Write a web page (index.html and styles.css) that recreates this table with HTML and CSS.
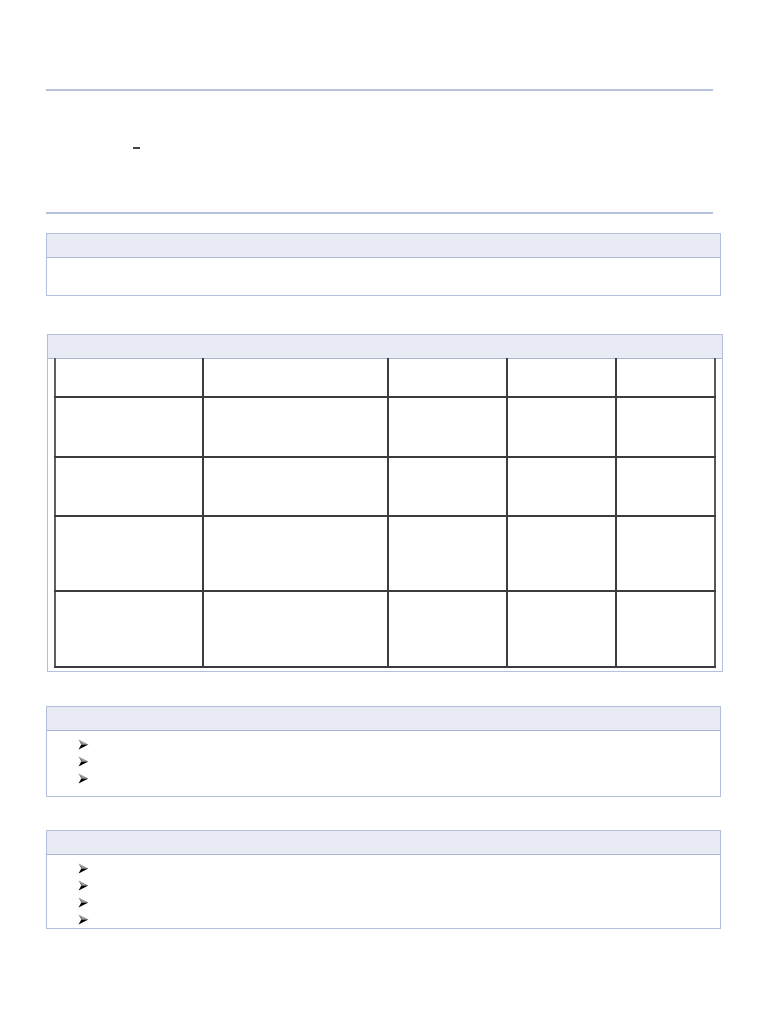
FILE: index.html
```html
<!DOCTYPE html>
<html>
<head>
<meta charset="utf-8">
<link rel="stylesheet" href="styles.css">
</head>
<body>
<div class="page">
  <div class="rule"></div>
  <div class="title-area"><span class="dash"></span></div>
  <div class="rule"></div>

  <section class="box box-1">
    <div class="box-head"></div>
    <div class="box-body"></div>
  </section>

  <section class="box box-2">
    <div class="box-head"></div>
    <div class="box-table">
      <table class="grid">
        <colgroup>
          <col class="c1"><col class="c2"><col class="c3"><col class="c4"><col class="c5">
        </colgroup>
        <tr class="r1"><td></td><td></td><td></td><td></td><td></td></tr>
        <tr class="r2"><td></td><td></td><td></td><td></td><td></td></tr>
        <tr class="r3"><td></td><td></td><td></td><td></td><td></td></tr>
        <tr class="r4"><td></td><td></td><td></td><td></td><td></td></tr>
        <tr class="r5"><td></td><td></td><td></td><td></td><td></td></tr>
      </table>
    </div>
  </section>

  <section class="box box-3">
    <div class="box-head"></div>
    <ul class="bullets">
      <li><svg class="arrow" viewBox="0 0 10 10"><path d="M0.5 0.5 L9.5 5 L4.5 5 Z" fill="#9a9a9a"/><path d="M9.5 5 L0.5 9.5 L3 5 Z" fill="#000"/><path d="M0.5 0.5 L4.5 5 L3 5 Z" fill="#555"/></svg></li>
      <li><svg class="arrow" viewBox="0 0 10 10"><path d="M0.5 0.5 L9.5 5 L4.5 5 Z" fill="#9a9a9a"/><path d="M9.5 5 L0.5 9.5 L3 5 Z" fill="#000"/><path d="M0.5 0.5 L4.5 5 L3 5 Z" fill="#555"/></svg></li>
      <li><svg class="arrow" viewBox="0 0 10 10"><path d="M0.5 0.5 L9.5 5 L4.5 5 Z" fill="#9a9a9a"/><path d="M9.5 5 L0.5 9.5 L3 5 Z" fill="#000"/><path d="M0.5 0.5 L4.5 5 L3 5 Z" fill="#555"/></svg></li>
    </ul>
  </section>

  <section class="box box-4">
    <div class="box-head"></div>
    <ul class="bullets">
      <li><svg class="arrow" viewBox="0 0 10 10"><path d="M0.5 0.5 L9.5 5 L4.5 5 Z" fill="#9a9a9a"/><path d="M9.5 5 L0.5 9.5 L3 5 Z" fill="#000"/><path d="M0.5 0.5 L4.5 5 L3 5 Z" fill="#555"/></svg></li>
      <li><svg class="arrow" viewBox="0 0 10 10"><path d="M0.5 0.5 L9.5 5 L4.5 5 Z" fill="#9a9a9a"/><path d="M9.5 5 L0.5 9.5 L3 5 Z" fill="#000"/><path d="M0.5 0.5 L4.5 5 L3 5 Z" fill="#555"/></svg></li>
      <li><svg class="arrow" viewBox="0 0 10 10"><path d="M0.5 0.5 L9.5 5 L4.5 5 Z" fill="#9a9a9a"/><path d="M9.5 5 L0.5 9.5 L3 5 Z" fill="#000"/><path d="M0.5 0.5 L4.5 5 L3 5 Z" fill="#555"/></svg></li>
      <li><svg class="arrow" viewBox="0 0 10 10"><path d="M0.5 0.5 L9.5 5 L4.5 5 Z" fill="#9a9a9a"/><path d="M9.5 5 L0.5 9.5 L3 5 Z" fill="#000"/><path d="M0.5 0.5 L4.5 5 L3 5 Z" fill="#555"/></svg></li>
    </ul>
  </section>
</div>
</body>
</html>
```

FILE: styles.css
```css
html, body {
  margin: 0;
  padding: 0;
  background: #ffffff;
  font-family: "Liberation Sans", Arial, sans-serif;
}

.page {
  padding: 89px 0 0 46px;
  display: flex;
  flex-direction: column;
  align-items: flex-start;
}

.rule {
  width: 667px;
  height: 2px;
  background: #b6c1dc;
}

.title-area {
  height: 121px;
  width: 667px;
}

.dash {
  display: block;
  margin: 56px 0 0 87px;
  width: 7px;
  height: 2px;
  background: #444;
}

.box {
  border: 1px solid #b3bfdc;
  box-sizing: border-box;
  background: #fff;
}

.box-head {
  height: 23px;
  background: #e8ebf3;
  border-bottom: 1px solid #a9b6d6;
}

.box-1 {
  margin-top: 19px;
  width: 675px;
  height: 63px;
}

.box-2 {
  margin-top: 38px;
  margin-left: 1px;
  width: 676px;
  height: 338px;
}

.box-table {
  padding: 0 0 0 6px;
}

.grid {
  border-collapse: collapse;
  table-layout: fixed;
  width: 660px;
  margin-top: -1px;
}

.grid td {
  border: 2px solid #3c3c3c;
  border-top-width: 1px;
  padding: 0;
}

.grid tr:first-child td {
  border-top: 1px solid transparent;
}

.grid td:first-child {
  border-left: 2px solid #606060;
}

.grid td:last-child {
  border-right: 2px solid #5a5a5a;
}

.c1 { width: 148px; }
.c2 { width: 185px; }
.c3 { width: 119px; }
.c4 { width: 109px; }
.c5 { width: 99px; }

.r1 td { height: 37px; }
.r2 td { height: 58px; }
.r3 td { height: 57px; }
.r4 td { height: 73px; }
.r5 td { height: 74px; }

.box-3 {
  margin-top: 34px;
  width: 675px;
  height: 91px;
}

.box-4 {
  margin-top: 33px;
  width: 675px;
  height: 99px;
}

.bullets {
  list-style: none;
  margin: 0;
  padding: 5px 0 0 31px;
}

.bullets li {
  height: 17px;
  display: flex;
  align-items: center;
}

.arrow {
  width: 11px;
  height: 11px;
  display: block;
}
```
